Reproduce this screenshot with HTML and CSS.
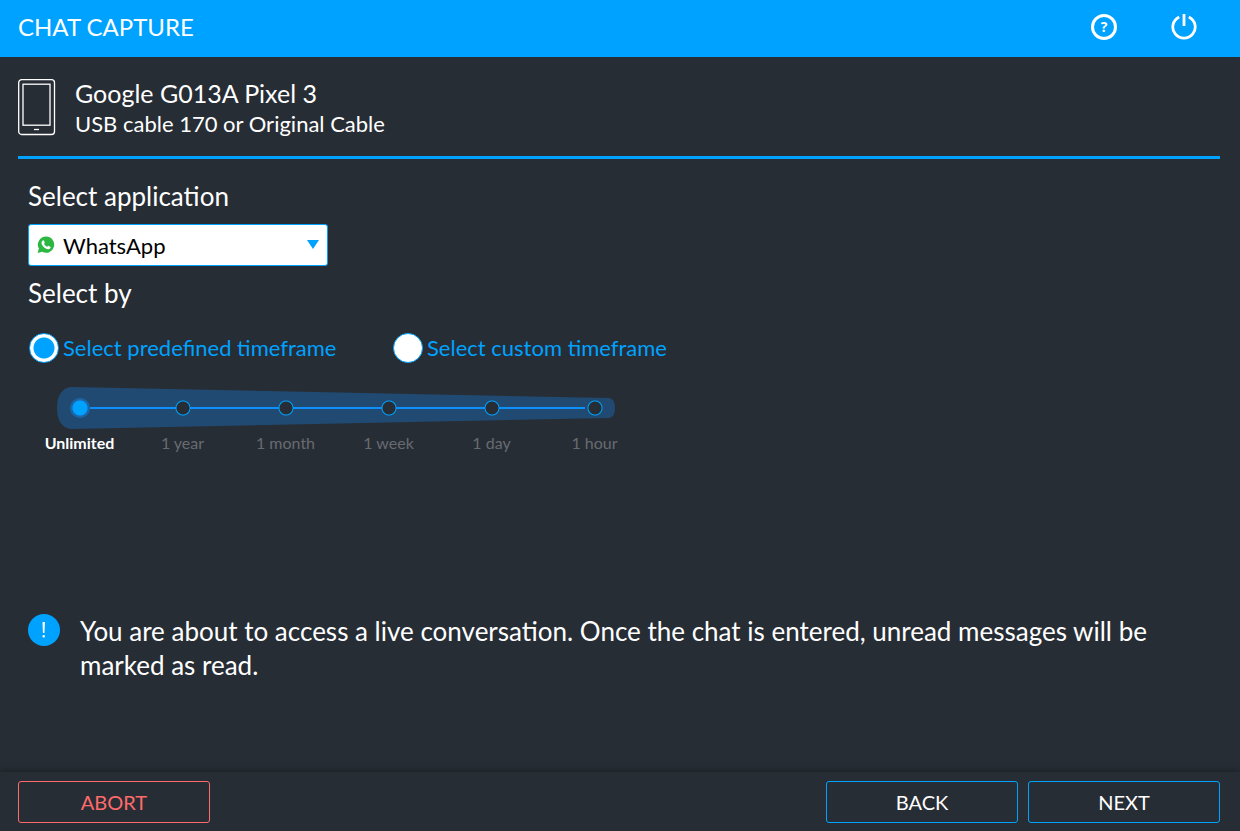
FILE: index.html
```html
<!DOCTYPE html>
<html lang="en">
<head>
<meta charset="utf-8">
<meta name="viewport" content="width=device-width, initial-scale=1">
<title>Chat Capture</title>
<link rel="stylesheet" href="styles.css">
</head>
<body>
<header class="topbar">
  <h1 class="topbar-title">CHAT CAPTURE</h1>
  <div class="topbar-actions">
    <button class="icon-button help-button" type="button" aria-label="Help">?</button>
    <button class="icon-button" type="button" aria-label="Exit">
      <svg width="26" height="26" viewBox="0 0 26 26" fill="none" stroke="#fff" stroke-width="2.8">
        <path d="M8.2 2.900A11.200 11.200 0 1 0 17.800 2.900"/>
        <path d="M13 0V12"/>
      </svg>
    </button>
  </div>
</header>

<main class="content">
  <section class="device">
    <svg class="device-icon" width="38" height="57" viewBox="0 0 38 57" fill="none" stroke="#fff">
      <rect x="0.700" y="0.700" width="35.800" height="54.800" rx="3" stroke-width="1.300"/>
      <rect x="5" y="5.200" width="27" height="41" stroke-width="1.300"/>
      <path d="M16 50.500h5" stroke-width="1.300"/>
    </svg>
    <div>
      <h2 class="device-name">Google G013A Pixel 3</h2>
      <p class="device-cable">USB cable 170 or Original Cable</p>
    </div>
  </section>

  <form class="capture-form">
    <label class="field-title" for="application">Select application</label>
    <div class="select-box">
      <select id="application" class="select-input">
        <option>WhatsApp</option>
      </select>
      <svg class="select-logo" width="18" height="18" viewBox="0 0 18 18">
        <path d="M9.200 0.600a8.100 8.100 0 1 1-4 15.200L0.600 17l1.300-4.400A8.100 8.100 0 0 1 9.200 0.600z" fill="#2cb742"/>
        <path d="M5.200 4.900c.5-.7 1.300-.8 1.700-.2l.8 1.600c.2.400-.1.900-.7 1.500.8 1.500 1.800 2.400 3.200 3 .7-.9 1-1.100 1.400-.9l1.700.8c.5.300.4 1.200-.2 1.800-1.200 1.100-3.200.8-5.200-.6-2.400-1.700-4.400-4.900-2.700-7z" fill="#fff"/>
      </svg>
      <svg class="select-arrow" width="12" height="9" viewBox="0 0 12 9"><path d="M0 0h12L6 9z" fill="#00a2ff"/></svg>
    </div>

    <fieldset class="group">
      <legend class="field-title">Select by</legend>
      <div class="modes">
        <label class="mode"><input class="mode-radio" type="radio" name="mode" checked>Select predefined timeframe</label>
        <label class="mode"><input class="mode-radio" type="radio" name="mode">Select custom timeframe</label>
      </div>
    </fieldset>

    <fieldset class="group timeframe" aria-label="Timeframe">
      <svg class="timeframe-track" width="558" height="42" viewBox="0 0 558 42">
        <path d="M14 0L552 11Q558 12 558 21T552 31L14 42Q0 40 0 21T14 0z" fill="#204a72"/>
        <path d="M33 21H528" stroke="#0f8ffb" stroke-width="2"/>
      </svg>
      <div class="steps">
        <label class="step"><input class="step-radio" type="radio" name="timeframe" checked><span class="step-text">Unlimited</span></label>
        <label class="step"><input class="step-radio" type="radio" name="timeframe"><span class="step-text">1 year</span></label>
        <label class="step"><input class="step-radio" type="radio" name="timeframe"><span class="step-text">1 month</span></label>
        <label class="step"><input class="step-radio" type="radio" name="timeframe"><span class="step-text">1 week</span></label>
        <label class="step"><input class="step-radio" type="radio" name="timeframe"><span class="step-text">1 day</span></label>
        <label class="step"><input class="step-radio" type="radio" name="timeframe"><span class="step-text">1 hour</span></label>
      </div>
    </fieldset>
  </form>

  <div class="notice">
    <svg class="notice-icon" width="32" height="32" viewBox="0 0 32 32">
      <circle cx="16" cy="16" r="16" fill="#00a2ff"/>
      <path d="M14.500 8h2.400l-.4 11h-1.600z" fill="#fff"/>
      <rect x="14.500" y="21" width="2.400" height="2.600" rx="1" fill="#fff"/>
    </svg>
    <p class="notice-text">You are about to access a live conversation. Once the chat is entered, unread messages will be marked as read.</p>
  </div>
</main>

<footer class="footer">
  <button class="button button-danger" type="button">ABORT</button>
  <button class="button button-back" type="button">BACK</button>
  <button class="button" type="button">NEXT</button>
</footer>
</body>
</html>
```
FILE: styles.css
```css
* {
  box-sizing: border-box;
}

body {
  margin: 0;
  min-height: 100vh;
  display: flex;
  flex-direction: column;
  background: #272d35;
  color: #fff;
  font-family: Lato, sans-serif;
}

h1, h2, p {
  margin: 0;
  font-weight: 400;
}

button, select {
  font-family: inherit;
}

.topbar {
  display: flex;
  align-items: center;
  justify-content: space-between;
  height: 57px;
  padding: 0 43px 3px 18px;
  background: #00a2ff;
}

.topbar-title {
  font-size: 24px;
  line-height: 32px;
}

.topbar-actions {
  display: flex;
  gap: 54px;
}

.icon-button {
  width: 26px;
  height: 26px;
  padding: 0;
  border: 0;
  background: none;
  color: #fff;
}

.icon-button svg {
  display: block;
}

.help-button {
  border: 3px solid #fff;
  border-radius: 50%;
  font: 700 14px/20px "Open Sans", sans-serif;
}

.content {
  flex: 1;
  display: flex;
  flex-direction: column;
  padding: 20px 20px 90px 18px;
}

.device {
  display: flex;
  gap: 19px;
  padding-bottom: 17px;
  border-bottom: 3px solid #00a2ff;
}

.device-icon {
  margin-top: 2px;
}

.device-name {
  font-size: 25px;
  line-height: 32px;
}

.device-cable {
  font-size: 22px;
  line-height: 30px;
}

.capture-form {
  padding: 21px 10px 0;
}

.field-title {
  display: block;
  padding: 0;
  font-size: 26px;
  line-height: 32px;
}

.select-box {
  position: relative;
  width: 300px;
  margin: 12px 0 11px;
}

.select-input {
  appearance: none;
  display: block;
  width: 100%;
  height: 42px;
  padding: 0 34px;
  border: 1px solid #00a2ff;
  border-radius: 3px;
  background: #fff;
  color: #000;
  font-size: 22px;
}

.select-logo {
  position: absolute;
  left: 9px;
  top: 12px;
  pointer-events: none;
}

.select-arrow {
  position: absolute;
  right: 9px;
  top: 16px;
  pointer-events: none;
}

.group {
  min-width: 0;
  margin: 0;
  padding: 0;
  border: 0;
}

.modes {
  display: grid;
  grid-template-columns: repeat(2, 364px);
  padding-top: 24px;
}

.mode {
  display: flex;
  align-items: center;
  gap: 4px;
  color: #00a2ff;
  font-size: 22px;
  line-height: 30px;
}

.mode-radio {
  appearance: none;
  width: 30px;
  height: 30px;
  margin: 0 0 0 1px;
  border: 1px solid #00a2ff;
  border-radius: 50%;
  background: #fff;
}

.mode-radio:checked {
  background: radial-gradient(circle, #00a2ff 10px, #fff 11px);
}

.timeframe {
  position: relative;
  margin-top: 24px;
}

.timeframe-track {
  position: absolute;
  left: 29px;
  top: 0;
}

.steps {
  position: relative;
  display: grid;
  grid-template-columns: repeat(6, 103px);
}

.step {
  display: flex;
  flex-direction: column;
  align-items: center;
  gap: 15px;
  padding-top: 11px;
  color: #676b71;
  font-size: 16px;
  line-height: 20px;
}

.step-radio {
  appearance: none;
  width: 20px;
  height: 20px;
  margin: 0;
  border-radius: 50%;
  background: radial-gradient(circle, #272d35 6px, #00a2ff 7px, #00a2ff 7px, transparent 8px);
}

.step-radio:checked {
  background: radial-gradient(circle, #00a2ff 7px, #1a66aa 8px);
}

.step-radio:checked + .step-text {
  color: #fff;
  font-weight: 700;
}

.notice {
  display: flex;
  gap: 20px;
  margin-top: auto;
  padding: 0 10px;
}

.notice-icon {
  flex: none;
}

.notice-text {
  font-size: 26px;
  line-height: 34px;
}

.footer {
  display: flex;
  gap: 10px;
  padding: 9px 20px 8px 18px;
  background: #272d35;
  box-shadow: 0 -1px 6px #1b2023;
}

.button {
  width: 192px;
  height: 42px;
  padding: 0;
  border: 1px solid #00a2ff;
  border-radius: 3px;
  background: none;
  color: #fff;
  font-size: 20px;
}

.button-danger {
  border-color: #ff6b6b;
  color: #ff6b6b;
}

.button-back {
  margin-left: auto;
}
```
